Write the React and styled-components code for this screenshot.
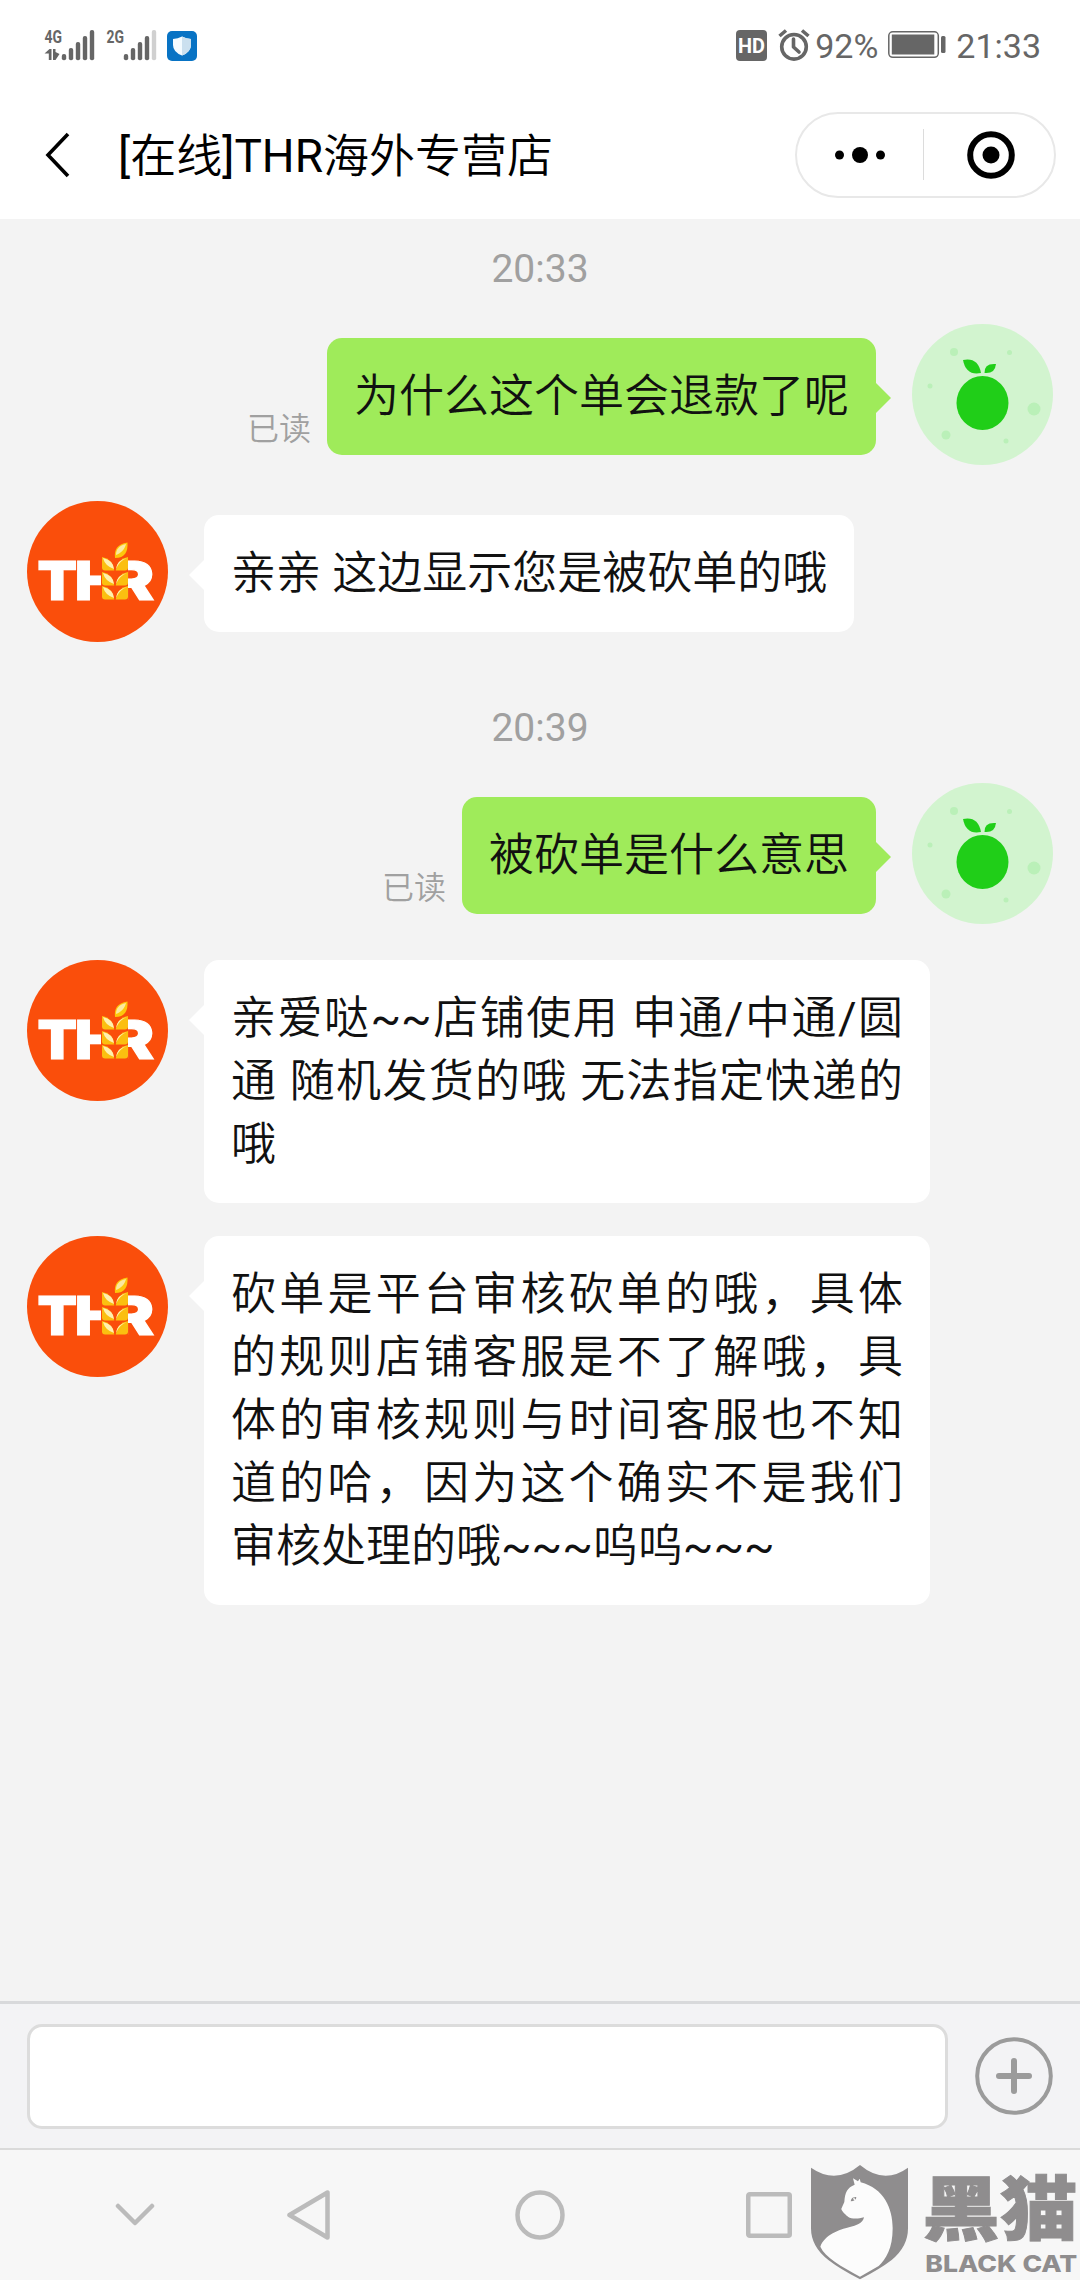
import styled, { createGlobalStyle } from "styled-components";

const GlobalStyle = createGlobalStyle`
  * {
    box-sizing: border-box;
  }
  body {
    margin: 0;
    font-family: Roboto, "Noto Sans CJK SC DemiLight", "Noto Sans CJK SC", sans-serif;
  }
  svg {
    display: block;
    flex-shrink: 0;
  }
`;

const Page = styled.div`
  position: relative;
  width: 1080px;
  height: 2280px;
  display: flex;
  flex-direction: column;
  overflow: hidden;
  background-color: #f3f3f3;
`;

const StatusBar = styled.div`
  height: 90px;
  padding: 0 39px 0 44px;
  display: flex;
  align-items: center;
  justify-content: space-between;
  background-color: white;
`;

const StatusGroup = styled.div`
  display: flex;
  align-items: center;
  gap: ${(props) => props.$gap}px;
`;

const StatusText = styled.span`
  padding-top: 2px;
  font-size: 34px;
  line-height: 40px;
  color: #666;
`;

const TitleBar = styled.header`
  height: 129px;
  padding: 0 24px 0 44px;
  display: flex;
  align-items: center;
  background-color: white;
`;

const Title = styled.h1`
  flex: 1;
  margin: 0 0 0 48px;
  padding-top: 3px;
  font-size: 46px;
  font-weight: 400;
  line-height: 60px;
  color: black;
`;

const Capsule = styled.div`
  width: 261px;
  height: 86px;
  display: flex;
  align-items: center;
  border: 2px solid #e8e8e8;
  border-radius: 43px;
`;

const CapsuleButton = styled.div`
  flex: 1;
  padding-left: ${(props) => props.$shift || 0}px;
  display: flex;
  justify-content: center;
`;

const CapsuleLine = styled.div`
  width: 1px;
  height: 51px;
  background-color: #dcdcdc;
`;

const Chat = styled.main`
  flex: 1;
  padding: 0 27px;
`;

const Time = styled.div`
  height: 105px;
  padding-top: 26px;
  font-size: 39px;
  line-height: 48px;
  text-align: center;
  color: #a0a0a0;
`;

const Row = styled.div`
  display: flex;
  flex-direction: ${(props) => (props.$mine ? "row-reverse" : "row")};
  align-items: flex-start;
  gap: 36px;
  min-height: 141px;
  margin-bottom: ${(props) => (props.$long ? 33 : 36)}px;
`;

const BubbleWrap = styled.div`
  display: flex;
  align-items: flex-end;
  gap: 16px;
  margin-top: ${(props) => (props.$long ? 0 : 14)}px;
`;

const Bubble = styled.div`
  position: relative;
  max-width: 726px;
  padding: 27px;
  border-radius: 15px;
  background-color: ${(props) => (props.$mine ? "#9feb5a" : "white")};
  font-size: 45px;
  line-height: 63px;
  text-align: justify;
  color: #111;

  &::after {
    content: "";
    position: absolute;
    top: 45px;
    ${(props) => (props.$mine ? "right" : "left")}: -15px;
    border: 15px solid transparent;
    border-${(props) => (props.$mine ? "right" : "left")}-width: 0;
    border-${(props) => (props.$mine ? "left" : "right")}-color: ${(props) =>
      props.$mine ? "#9feb5a" : "white"};
  }
`;

const Read = styled.span`
  margin-bottom: 2px;
  font-size: 32px;
  line-height: 48px;
  color: #a0a0a0;
`;

const InputBar = styled.div`
  height: 147px;
  padding: 0 27px;
  display: flex;
  align-items: center;
  justify-content: space-between;
  border-top: 3px solid #d8d9db;
  background-color: #f3f3f5;
`;

const Input = styled.div`
  width: 921px;
  height: 105px;
  border: 3px solid #dcdcdc;
  border-radius: 15px;
  background-color: white;
`;

const NavBar = styled.nav`
  height: 132px;
  display: grid;
  grid-template-columns: 270px 78px 384px 74px;
  align-items: center;
  justify-items: center;
  border-top: 2px solid #dadada;
  background-color: #f7f7f7;
`;

const Watermark = styled.svg`
  position: absolute;
  right: 0;
  bottom: 0;
`;

const Signal = ({ label, weak, arrows }) => (
  <svg width="52" height="46" viewBox="0 -7 52 46" fill="#666">
    <text
      x="0.5"
      y="13.5"
      fontSize="18"
      fontWeight="700"
      textLength="17.5"
      lengthAdjust="spacingAndGlyphs"
    >
      {label}
    </text>
    {arrows && (
      <path d="M0.5 24.5 L5.500 20 H7.500 V31 H4.800 V24.5Z M9 20 H11.500 V23 L15.500 25 L11.500 31 H9Z" />
    )}
    {[0, 1, 2, 3, 4].map((i) => (
      <rect
        key={i}
        x={17.8 + i * 7}
        y={25 - i * 6}
        width="4.4"
        height={6.2 + i * 6}
        rx="2"
        fill={weak && i === 4 ? "#d0d0d0" : "#666"}
      />
    ))}
  </svg>
);

const GuardIcon = () => (
  <svg width="30" height="32" viewBox="0 -2 30 32">
    <rect width="30" height="30" rx="5" fill="#0873c4" />
    <path d="M15 5.5 Q19 7.5 24 8 V14 Q24 21 15 24.5 Q6 21 6 14 V8 Q11 7.5 15 5.5Z" fill="#f4fbff" />
    <path d="M15 5.5 Q19 7.5 24 8 V14 Q24 21 15 24.5Z" fill="#cbe0ef" />
  </svg>
);

const HdIcon = () => (
  <svg width="31" height="31" viewBox="0 0 31 31">
    <rect width="31" height="31" rx="4" fill="#666" />
    <text
      x="2"
      y="22.5"
      fontSize="20"
      fontWeight="700"
      fill="white"
      textLength="27"
      lengthAdjust="spacingAndGlyphs"
    >
      HD
    </text>
  </svg>
);

const AlarmIcon = () => (
  <svg width="32" height="32" viewBox="0 0 32 32" fill="none" stroke="#666" strokeWidth="3.6">
    <circle cx="16" cy="17.8" r="12.3" />
    <path d="M15.5 10 V18 L21 23" strokeLinejoin="round" strokeLinecap="round" />
    <path d="M1.5 7 L8 1.5 M24 1.5 L30.5 7" />
  </svg>
);

const BatteryIcon = () => (
  <svg width="58" height="28" viewBox="0 0 58 28">
    <rect x="0.8" y="0.8" width="49.5" height="25.5" rx="4" fill="none" stroke="#666" strokeWidth="1.5" />
    <rect x="3.8" y="3.5" width="42.5" height="20" fill="#666" />
    <rect x="53" y="5" width="4.5" height="17" rx="1.5" fill="#666" />
  </svg>
);

const BackIcon = () => (
  <svg width="26" height="46" viewBox="0 0 26 46">
    <path d="M24 2 L4 23 L24 44" fill="none" stroke="black" strokeWidth="3.6" />
  </svg>
);

const LeafAvatar = () => (
  <svg width="141" height="141" viewBox="0 0 141 141">
    <circle cx="70.5" cy="70.5" r="70.5" fill="#d2f4cf" />
    <g fill="#baf0b8">
      <circle cx="42" cy="28" r="4" />
      <circle cx="97.5" cy="28.5" r="2.5" />
      <circle cx="18" cy="62" r="2.5" />
      <circle cx="122" cy="85" r="6.5" />
      <circle cx="34" cy="111" r="4.5" />
      <circle cx="94" cy="117" r="2.5" />
    </g>
    <g fill="#20ce18">
      <ellipse cx="70.5" cy="79" rx="26" ry="27" />
      <path d="M51 36 Q66 33 69 49 Q54 52 51 36Z" />
      <path d="M84 40 Q72 39 72.5 49 Q83 50 84 40Z" />
    </g>
  </svg>
);

const ShopAvatar = () => (
  <svg width="141" height="141" viewBox="0 0 141 141">
    <circle cx="70.5" cy="70.5" r="70.5" fill="#fa4e0b" />
    <g
      fill="white"
      stroke="white"
      strokeWidth="1.2"
      fontFamily="Inter"
      fontWeight="900"
      fontSize="54"
    >
      <text x="10.5" y="98.5" textLength="39.5" lengthAdjust="spacingAndGlyphs">T</text>
      <text x="48" y="98.5" textLength="44" lengthAdjust="spacingAndGlyphs">H</text>
      <text x="85" y="98.5" textLength="42" lengthAdjust="spacingAndGlyphs">R</text>
    </g>
    <rect x="74" y="55" width="27" height="45" fill="#fa4e0b" />
    <path d="M100.5 41.5 C90 43 87 49 88 57 C98 57 101 51 100.5 41.5Z" fill="#fdc60c" />
    <path d="M99 43 C91 45 89 49 89 54 C94 52 98 48 99 43Z" fill="#fbe9a0" />
    {[56, 71, 85].map((y) => (
      <g key={y}>
        <path
          d={`M75 ${y} Q86 ${y + 2} 87.3 ${y + 13.500} H78 Q75 ${y + 13.500} 75 ${y + 10.500}Z`}
          fill="#fbbf10"
        />
        <path
          d={`M101 ${y} Q90 ${y + 2} 88.7 ${y + 13.500} H98 Q101 ${y + 13.500} 101 ${y + 10.500}Z`}
          fill="#fbbf10"
        />
        <path d={`M76 ${y + 1} Q86 ${y + 3} 87 ${y + 12} Q78 ${y + 9} 76 ${y + 1}Z`} fill="#fff0b0" />
        <path d={`M100 ${y + 1} Q90 ${y + 3} 89 ${y + 12} Q92 ${y + 4} 100 ${y + 1}Z`} fill="#fff0b0" />
      </g>
    ))}
  </svg>
);

const BlackCat = () => (
  <Watermark width="300" height="150" viewBox="0 0 900 450" fill="#8f8d8e">
    <path d="M93 113 Q168 165 240 105 Q312 165 384 113 V295 Q384 350 335 390 Q300 417 240 448 Q180 417 145 390 Q93 350 93 295Z" />
    <path
      d="M219 145 L234 154 L239 146 L242 157 C312 175 338 235 338 295 C338 355 318 388 296 408 L240 440 C185 410 135 382 121 350 C133 315 180 298 207 292 C230 286 249 280 252 262 C232 268 213 266 205 261 C199 256 184 243 184 236 L193 216 C195 186 202 173 224 164Z"
      fill="#fcfcfc"
    />
    <path d="M212 214 Q214 200 229 201 Q229 213 212 214Z" />
    <path d="M221 203 L224 211" stroke="#fcfcfc" strokeWidth="4" />
    <text
      transform="translate(427 315) scale(1 0.91)"
      fontFamily="Noto Sans CJK SC"
      fontWeight="900"
      fontSize="233"
      stroke="#8f8d8e"
      strokeWidth="3"
    >
      黑猫
    </text>
    <text
      x="436"
      y="427"
      fontFamily="Inter"
      fontWeight="800"
      fontSize="68"
      textLength="456"
      lengthAdjust="spacingAndGlyphs"
    >
      BLACK CAT
    </text>
  </Watermark>
);

const Message = ({ mine, long, children }) => (
  <Row $mine={mine} $long={long}>
    {mine ? <LeafAvatar /> : <ShopAvatar />}
    <BubbleWrap $long={long}>
      {mine && <Read>已读</Read>}
      <Bubble $mine={mine}>{children}</Bubble>
    </BubbleWrap>
  </Row>
);

const App = () => {
  return (
    <Page lang="zh-CN">
      <GlobalStyle />
      <StatusBar>
        <StatusGroup $gap={9.5}>
          <Signal label="4G" arrows />
          <Signal label="2G" weak />
          <GuardIcon />
        </StatusGroup>
        <StatusGroup $gap={10}>
          <StatusGroup $gap={11}>
            <HdIcon />
            <StatusGroup $gap={5}>
              <AlarmIcon />
              <StatusText>92%</StatusText>
            </StatusGroup>
          </StatusGroup>
          <BatteryIcon />
          <StatusText>21:33</StatusText>
        </StatusGroup>
      </StatusBar>
      <TitleBar>
        <BackIcon />
        <Title>[在线]THR海外专营店</Title>
        <Capsule>
          <CapsuleButton>
            <svg width="50" height="16" viewBox="0 0 50 16">
              <circle cx="4.5" cy="8" r="4.5" />
              <circle cx="25" cy="8" r="8" />
              <circle cx="45.5" cy="8" r="4.5" />
            </svg>
          </CapsuleButton>
          <CapsuleLine />
          <CapsuleButton $shift={5}>
            <svg width="48" height="48" viewBox="0 0 48 48">
              <circle cx="24" cy="24" r="20.8" fill="none" stroke="black" strokeWidth="6" />
              <circle cx="24" cy="24" r="8.5" />
            </svg>
          </CapsuleButton>
        </Capsule>
      </TitleBar>
      <Chat>
        <Time>20:33</Time>
        <Message mine>为什么这个单会退款了呢</Message>
        <Message>亲亲 这边显示您是被砍单的哦</Message>
        <Time>20:39</Time>
        <Message mine>被砍单是什么意思</Message>
        <Message long>
          亲爱哒~~店铺使用 申通/中通/圆通 随机发货的哦 无法指定快递的哦
        </Message>
        <Message long>
          砍单是平台审核砍单的哦，具体的规则店铺客服是不了解哦，具体的审核规则与时间客服也不知道的哈，因为这个确实不是我们审核处理的哦~~~呜呜~~~
        </Message>
      </Chat>
      <InputBar>
        <Input />
        <svg width="78" height="78" viewBox="0 0 78 78" fill="none" stroke="#9b9b9b">
          <circle cx="39" cy="39" r="36.8" strokeWidth="4" />
          <path d="M39 24 V54 M24 39 H54" strokeWidth="6" strokeLinecap="round" />
        </svg>
      </InputBar>
      <NavBar>
        <svg width="40" height="24" viewBox="0 0 40 24" fill="none" stroke="#bbb" strokeWidth="4.5">
          <path d="M3 3 L20 20 L37 3" strokeLinecap="round" strokeLinejoin="round" />
        </svg>
        <svg width="44" height="50" viewBox="0 0 44 50" fill="none" stroke="#bbb" strokeWidth="4.5">
          <path d="M40.5 2.5 V47.5 L2.5 25Z" strokeLinejoin="round" />
        </svg>
        <svg width="50" height="50" viewBox="0 0 50 50" fill="none" stroke="#bbb" strokeWidth="4.5">
          <circle cx="25" cy="25" r="22.5" />
        </svg>
        <svg width="46" height="46" viewBox="0 0 46 46" fill="none" stroke="#bbb" strokeWidth="4.5">
          <rect x="2.25" y="2.25" width="41.5" height="41.5" rx="1.5" />
        </svg>
      </NavBar>
      <BlackCat />
    </Page>
  );
};

export default App;
